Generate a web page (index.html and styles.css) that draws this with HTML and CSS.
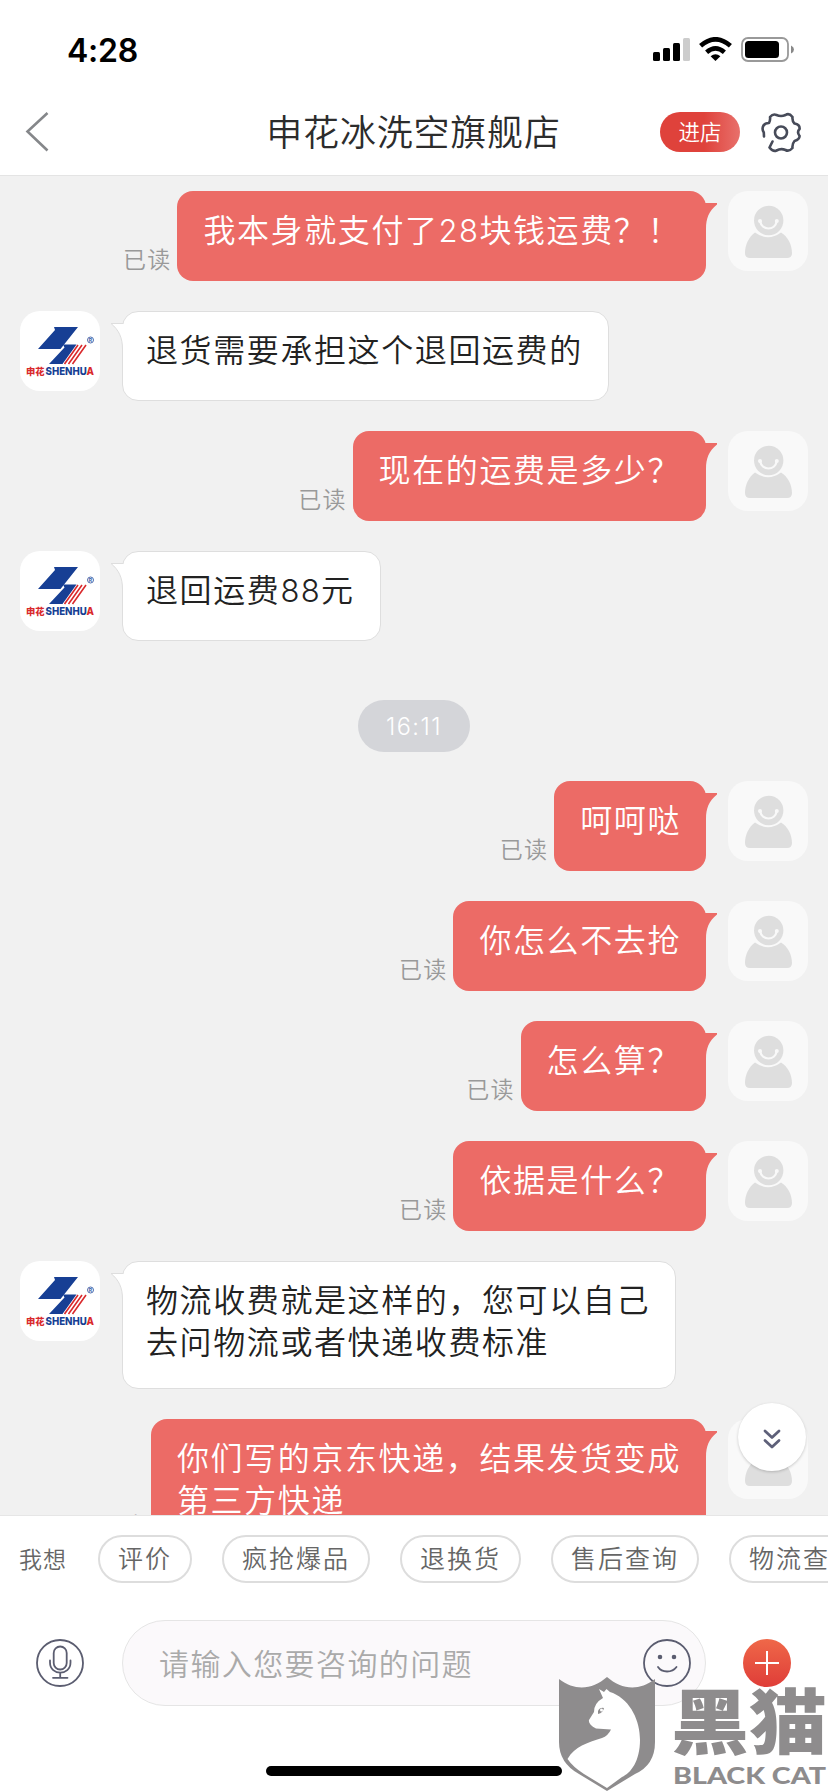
FILE: index.html
```html
<!DOCTYPE html>
<html lang="zh-CN">
<head>
<meta charset="utf-8">
<title>申花冰洗空旗舰店</title>
<link rel="stylesheet" href="styles.css">
</head>
<body>
<svg class="defs" width="0" height="0">
  <symbol id="user" viewBox="0 0 80 80">
    <path d="M27 41.500C21 45.500 17 54 17 62Q17 67 22 67H59Q64 67 64 62C64 54 60 45.500 53 41.500Q40 51 27 41.500Z" fill="#dedede"/>
    <circle cx="40.700" cy="29.500" r="14.700" fill="#dedede"/>
    <path d="M32 30C34 40 47 40 48.800 30" fill="none" stroke="#f9f9f9" stroke-width="2.200"/>
    <circle cx="32" cy="30" r="2" fill="#f9f9f9"/><circle cx="48.800" cy="30" r="2" fill="#f9f9f9"/>
  </symbol>
  <symbol id="brand" viewBox="0 0 80 80">
    <path d="M34 16H58L40.500 38H18L35 19Z" fill="#173f94"/>
    <path d="M43 33.500H56.500L42.500 53H29L44.500 36.500Z" fill="#173f94"/>
    <path d="M58 34L44.500 53M62 34L48.500 53M66 34L52.500 53" stroke="#d9292c" stroke-width="1.600"/>
    <circle cx="70.500" cy="29" r="3" fill="none" stroke="#3a5da5" stroke-width=".9"/>
    <text x="70.500" y="31" class="reg">R</text>
    <text x="6" y="63.500" class="mark-cn" textLength="18.500" lengthAdjust="spacingAndGlyphs">申花</text>
    <text x="25.500" y="63.700" class="mark-en" textLength="48.500" lengthAdjust="spacingAndGlyphs">SHENHU<tspan fill="#d9292c">A</tspan></text>
  </symbol>
  <symbol id="tail-r" viewBox="0 0 14 28"><path d="M0 1H13V2.500C5 9 2 16 2 27H0Z" fill="#ec6b66"/></symbol>
  <symbol id="tail-l" viewBox="0 0 14 28"><path d="M14 1.500H1C9 8 12.500 16 12.500 27H14Z" fill="#fff"/><path d="M13.500 1.500H1C9 8 12.500 16 12.500 27" fill="none" stroke="#dedede"/></symbol>
</svg>

<div class="screen">
  <header class="status">
    <span class="clock">4:28</span>
    <svg width="142" height="26" viewBox="0 0 142 26">
      <rect x="0" y="15" width="7" height="9" rx="1.500"/><rect x="10" y="11" width="7" height="13" rx="1.500"/><rect x="20" y="6" width="7" height="18" rx="1.500"/><rect x="30" y="1" width="7" height="23" rx="1.500" fill="#ccc"/>
      <g fill="none" stroke="#000" stroke-width="4.600"><path d="M47.600 8.800Q62.500-4.200 77.400 8.800"/><path d="M53.600 15.300Q62.500 7.500 71.400 15.300"/></g>
      <path d="M57.600 19.200Q62.500 15.500 67.400 19.200L62.500 24Z"/>
      <rect x="89" y="1" width="46" height="23" rx="6" fill="none" stroke="#999" stroke-width="1.800"/><rect x="92" y="4" width="34" height="17" rx="3.500"/><path d="M138 8.500Q141 10 141 12.500T138 16.500Z" fill="#888"/>
    </svg>
  </header>

  <nav class="titlebar">
    <svg class="back" width="24" height="42" viewBox="0 0 24 42"><path d="M22.500 2L2.500 20.500L22.500 39.500" fill="none" stroke="#85878a" stroke-width="2.600"/></svg>
    <h1 class="title">申花冰洗空旗舰店</h1>
    <div class="actions">
      <span class="enter">进店</span>
      <svg width="42" height="42" viewBox="0 0 42 42" fill="none" stroke="#474b59" stroke-width="2.600" stroke-linecap="round" stroke-linejoin="round">
        <path d="M4 25.500L3.800 21.500Q1.500 18 3.500 14.500Q5 12 9 12Q10.500 9 10 6Q13 2.500 16.500 4Q21 6 25.500 4Q29 1.500 32.500 6Q32 10 34.500 12.500Q40 13.500 39.600 18Q36.500 21 39.600 25Q39.500 28.500 34.500 30Q32 33 32.500 37Q29 41 25.500 39Q21 37 16.500 39.500Q13 41 9.500 36.500L12.500 30.500"/>
        <circle cx="21" cy="21.500" r="6"/>
      </svg>
    </div>
  </nav>

  <main class="chat">
    <div class="row mine"><span class="read">已读</span><div class="bubble">我本身就支付了<span class="num">28</span>块钱运费？！<svg class="tail"><use href="#tail-r"/></svg></div><svg class="avatar"><use href="#user"/></svg></div>
    <div class="row shop"><svg class="avatar"><use href="#brand"/></svg><div class="bubble">退货需要承担这个退回运费的<svg class="tail"><use href="#tail-l"/></svg></div></div>
    <div class="row mine"><span class="read">已读</span><div class="bubble">现在的运费是多少？<svg class="tail"><use href="#tail-r"/></svg></div><svg class="avatar"><use href="#user"/></svg></div>
    <div class="row shop"><svg class="avatar"><use href="#brand"/></svg><div class="bubble">退回运费<span class="num">88</span>元<svg class="tail"><use href="#tail-l"/></svg></div></div>
    <time class="time">16:11</time>
    <div class="row mine"><span class="read">已读</span><div class="bubble">呵呵哒<svg class="tail"><use href="#tail-r"/></svg></div><svg class="avatar"><use href="#user"/></svg></div>
    <div class="row mine"><span class="read">已读</span><div class="bubble">你怎么不去抢<svg class="tail"><use href="#tail-r"/></svg></div><svg class="avatar"><use href="#user"/></svg></div>
    <div class="row mine"><span class="read">已读</span><div class="bubble">怎么算？<svg class="tail"><use href="#tail-r"/></svg></div><svg class="avatar"><use href="#user"/></svg></div>
    <div class="row mine"><span class="read">已读</span><div class="bubble">依据是什么？<svg class="tail"><use href="#tail-r"/></svg></div><svg class="avatar"><use href="#user"/></svg></div>
    <div class="row shop"><svg class="avatar"><use href="#brand"/></svg><div class="bubble">物流收费就是这样的，您可以自己<br>去问物流或者快递收费标准<svg class="tail"><use href="#tail-l"/></svg></div></div>
    <div class="row mine"><span class="read">已读</span><div class="bubble">你们写的京东快递，结果发货变成<br>第三方快递<svg class="tail"><use href="#tail-r"/></svg></div><svg class="avatar"><use href="#user"/></svg></div>
    <button class="latest" aria-label="最新消息"><svg width="20" height="22" viewBox="0 0 20 22" fill="none" stroke="#5e6079" stroke-width="2.800" stroke-linecap="round" stroke-linejoin="round"><path d="M3 3L10 9.500L17 3M3 12.500L10 19L17 12.500"/></svg></button>
  </main>

  <footer class="composer">
    <div class="chips"><span class="lead">我想</span><span class="chip">评价</span><span class="chip">疯抢爆品</span><span class="chip">退换货</span><span class="chip">售后查询</span><span class="chip">物流查询</span></div>
    <div class="entry">
      <svg class="icon" viewBox="0 0 48 48" fill="none" stroke="#5b5d70" stroke-width="1.800" stroke-linecap="round"><circle cx="24" cy="24" r="23"/><rect x="17.700" y="7.500" width="13" height="23" rx="6.500"/><path d="M14 21.500V23.500C14 37 34.500 37 34.500 23.500V21.500M24.200 34V38.500M17 38.800H31.500"/></svg>
      <div class="field"><span>请输入您要咨询的问题</span>
        <svg class="icon" viewBox="0 0 48 48" fill="none" stroke="#5b5d70" stroke-width="1.800" stroke-linecap="round"><circle cx="24" cy="24" r="23"/><path d="M15 28C19 34 29 34 33.500 28"/><circle cx="17" cy="18" r="1.400" fill="#5b5d70"/><circle cx="31" cy="18" r="1.400" fill="#5b5d70"/></svg>
      </div>
      <svg class="icon" viewBox="0 0 48 48"><defs><linearGradient id="warm" x2="0" y2="1"><stop stop-color="#ef6849"/><stop offset="1" stop-color="#df3d38"/></linearGradient></defs><circle cx="24" cy="24" r="24" fill="url(#warm)"/><path d="M12 24H36M24 12V36" stroke="#fff" stroke-width="2"/></svg>
    </div>
    <div class="home"></div>
  </footer>

  <svg class="watermark" viewBox="0 0 270 116">
    <path d="M1 3C18 16 35 13 49 1C63 13 80 16 97 3V66Q97 89 77 98L49 115L21 98Q1 87 1 66Z" fill="#8e8c8d"/>
    <path d="M41 13L46 16L48.500 13Q51 16 55 17C73 25 82 45 82 64C82 85 73 97 64 101L49 112L26 98Q15 91 9.500 83C17 70 29 67 44 62Q50 60 53 53.500L38 52.500Q30 48 31 44L36 36Q36 27 45 22Z" fill="#fff"/>
    <path d="M40 35Q42 31 46 32Q45 37 40 38Z" fill="#8e8c8d"/><circle cx="43.500" cy="34" r="1.500" fill="#fff"/>
    <text x="113" y="71.500" class="wm-cn" textLength="156" lengthAdjust="spacingAndGlyphs">黑猫</text>
    <text x="115" y="107.500" class="wm-en" textLength="153" lengthAdjust="spacingAndGlyphs">BLACK CAT</text>
  </svg>
</div>
</body>
</html>
```
FILE: styles.css
```css
* { box-sizing: border-box; }
body {
  margin: 0;
  font-family: Inter, "Noto Sans CJK SC", sans-serif;
  font-weight: 350;
}
.defs { position: absolute; }
.screen {
  position: relative;
  display: flex;
  flex-direction: column;
  width: 828px;
  height: 1792px;
  overflow: hidden;
  background: #fff;
}

.status {
  display: flex;
  justify-content: space-between;
  align-items: center;
  height: 88px;
  padding: 12px 33px 0 67px;
  flex: none;
}
.clock { font-size: 32px; font-weight: 600; letter-spacing: -.2px; }

.titlebar {
  display: grid;
  grid-template-columns: 1fr auto 1fr;
  align-items: center;
  height: 88px;
  padding: 0 26px 0 25px;
  border-bottom: 1px solid #e4e4e4;
  flex: none;
}
.title {
  margin: 0;
  padding-bottom: 4px;
  font-size: 36px;
  font-weight: 350;
  letter-spacing: .8px;
  color: #2c2c2c;
}
.actions {
  display: flex;
  justify-content: flex-end;
  align-items: center;
  gap: 20px;
}
.enter {
  width: 80px;
  height: 40px;
  border-radius: 20px;
  background: linear-gradient(90deg, #df423b 55%, #e8706b);
  color: #fff;
  font-size: 21.500px;
  line-height: 40px;
  text-align: center;
}

.chat {
  position: relative;
  display: flex;
  flex-direction: column;
  gap: 30px;
  height: 1339px;
  padding: 15px 20px 0;
  overflow: hidden;
  background: #f1f1f1;
  flex: none;
}
.row { display: flex; flex: none; align-items: flex-start; }
.mine { justify-content: flex-end; }
.avatar { width: 80px; height: 80px; border-radius: 20px; flex: none; }
.mine .avatar { margin-left: 22px; background: #f9f9f9; }
.shop .avatar { margin-right: 22px; background: #fff; }
.bubble {
  position: relative;
  min-height: 90px;
  padding: 19px 25px 25px 26px;
  border-radius: 16px;
  font-size: 32px;
  line-height: 42px;
  letter-spacing: 1.600px;
  white-space: nowrap;
}
.num { font-size: 31px; letter-spacing: 1.400px; }
.mine .bubble { background: #ec6b66; color: #fff; }
.shop .bubble {
  padding: 18px 25px 24px 23px;
  border: 1px solid #dedede;
  background: #fff;
  color: #222;
}
.tail { position: absolute; width: 14px; height: 28px; }
.mine .tail { top: 11px; right: -12px; }
.shop .tail { top: 10px; left: -13px; }
.read {
  align-self: flex-end;
  margin: 0 6px 9px 0;
  font-size: 23px;
  line-height: 24px;
  letter-spacing: 1.200px;
  color: #999;
}
.time {
  align-self: center;
  width: 112px;
  height: 52px;
  margin: 29px 0 -1px;
  border-radius: 26px;
  background: #d4d5d9;
  color: #fff;
  font-size: 23.500px;
  letter-spacing: 1.500px;
  line-height: 53px;
  text-align: center;
  flex: none;
}
.latest {
  position: absolute;
  right: 22px;
  bottom: 44px;
  display: flex;
  align-items: center;
  justify-content: center;
  width: 68px;
  height: 68px;
  padding: 4px 0 0;
  border: 0;
  border-radius: 50%;
  background: #fff;
  box-shadow: 0 1px 3px rgba(0, 0, 0, .2);
}

.composer { flex: 1; border-top: 1px solid #e6e6e6; background: #fff; }
.chips {
  display: flex;
  align-items: center;
  gap: 30px;
  height: 86px;
  padding-left: 19px;
  overflow: hidden;
  color: #666;
  white-space: nowrap;
}
.lead { width: 49px; padding-bottom: 2px; font-size: 23px; letter-spacing: 1px; flex: none; }
.chip {
  height: 48px;
  padding: 0 18px;
  border: 2px solid #ddd;
  border-radius: 24px;
  font-size: 25px;
  line-height: 44px;
  letter-spacing: 2px;
  flex: none;
}
.entry {
  display: flex;
  align-items: center;
  justify-content: space-between;
  height: 86px;
  margin: 18px 37px 0 36px;
}
.icon { width: 48px; height: 48px; flex: none; }
.field {
  display: flex;
  align-items: center;
  justify-content: space-between;
  width: 584px;
  height: 86px;
  margin-left: 1px;
  padding: 0 14px 0 36px;
  border: 1px solid #e5e5e5;
  border-radius: 43px;
  background: #fbf9fb;
  color: #aaa;
  font-size: 30px;
  letter-spacing: 1.400px;
}
.field span { padding-bottom: 2px; }
.home {
  width: 296px;
  height: 10px;
  margin: 60px auto 0;
  border-radius: 5px;
  background: #000;
}

.watermark { position: absolute; left: 558px; top: 1676px; width: 270px; height: 116px; }
.wm-cn { font: 900 71px "Noto Sans CJK SC", sans-serif; fill: #8e8c8d; }
.wm-en { font: 900 23px Lato, sans-serif; fill: #8e8c8d; }
.mark-cn { font: 900 9.500px "Noto Sans CJK SC", sans-serif; fill: #d9292c; }
.mark-en { font: 800 10.500px Inter, sans-serif; fill: #173f94; }
.reg { font: 700 5px Inter, sans-serif; fill: #3a5da5; text-anchor: middle; }
```
